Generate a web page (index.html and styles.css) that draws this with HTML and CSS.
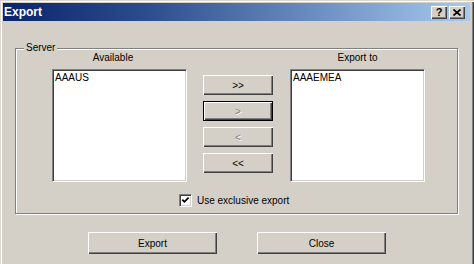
FILE: index.html
```html
<!DOCTYPE html>
<html lang="en">
<head>
    <meta charset="UTF-8">
    <meta name="viewport" content="width=device-width, initial-scale=1.0">
    <title>Export</title>
    <link rel="stylesheet" href="styles.css">
</head>
<body>
    <!-- Dialog window -->
    <div class="window">
        <div class="titlebar">
            <span class="title">Export</span>
            <div class="caption-btns">
                <div class="cap-btn help">?</div>
                <div class="cap-btn close">
                    <svg width="8" height="7" viewBox="0 0 8 7">
                        <path d="M0.5 0.5 L7.5 6.5 M7.5 0.5 L0.5 6.5" stroke="#000" stroke-width="1.7" fill="none"/>
                    </svg>
                </div>
            </div>
        </div>

        <div class="client">
            <!-- Server group -->
            <div class="group">
                <span class="legend">Server</span>

                <div class="lists">
                    <div class="col col-left">
                        <div class="col-label">Available</div>
                        <div class="listbox">
                            <div class="item">AAAUS</div>
                        </div>
                    </div>

                    <div class="movers">
                        <div class="btn">&gt;&gt;</div>
                        <div class="btn default disabled">&gt;</div>
                        <div class="btn disabled">&lt;</div>
                        <div class="btn">&lt;&lt;</div>
                    </div>

                    <div class="col">
                        <div class="col-label">Export to</div>
                        <div class="listbox">
                            <div class="item">AAAEMEA</div>
                        </div>
                    </div>
                </div>

                <div class="check-row">
                    <span class="checkbox">
                        <svg width="9" height="9" viewBox="0 0 9 9">
                            <path d="M1.3 3.6 L3.4 5.8 L7.6 1.6" stroke="#000" stroke-width="1.8" fill="none"/>
                        </svg>
                    </span>
                    <span class="check-label">Use exclusive export</span>
                </div>
            </div>

            <!-- Dialog buttons -->
            <div class="actions">
                <div class="btn wide">Export</div>
                <div class="btn wide">Close</div>
            </div>
        </div>
    </div>
</body>
</html>
```

FILE: styles.css
```css
/* Reset CSS */
* {
    margin: 0;
    padding: 0;
    box-sizing: border-box;
}

body {
    font-family: 'Liberation Sans', Arial, sans-serif;
    font-size: 10px;
    background: #d4d0c8;
    color: #000;
    width: 474px;
    height: 264px;
    overflow: hidden;
}

/* Window frame */
.window {
    width: 474px;
    height: 268px;
    padding: 3px 4px 0 3px;
    background: #d4d0c8;
    box-shadow: inset 1px 1px 0 #dcd8d0, inset 2px 2px 0 #fff, inset -1px -1px 0 #404040, inset -2px -2px 0 #808080;
}

.titlebar {
    height: 18px;
    display: flex;
    align-items: center;
    justify-content: space-between;
    padding: 0 5px 0 1px;
    background: linear-gradient(90deg, #0a246a 0%, #2a4c8c 30%, #a6caf0 100%);
}

.title {
    color: #fff;
    font-weight: bold;
    font-size: 12px;
}

.caption-btns {
    display: flex;
    gap: 2px;
}

.cap-btn {
    width: 16px;
    height: 13px;
    background: #d4d0c8;
    display: flex;
    align-items: center;
    justify-content: center;
    font-weight: bold;
    font-size: 11px;
    line-height: 1;
    box-shadow: inset 1px 1px 0 #fff, inset -1px -1px 0 #404040, inset -2px -2px 0 #808080;
}

.client {
    padding: 27px 12px 0 12px;
}

/* Group box */
.group {
    position: relative;
    width: 443px;
    height: 166px;
    padding: 3px 0 0 36px;
    border: 1px solid #808080;
    box-shadow: 1px 1px 0 #fff, inset 1px 1px 0 #fff;
}

.legend {
    position: absolute;
    top: -7px;
    left: 8px;
    padding: 0 2px;
    background: #d4d0c8;
    line-height: 12px;
}

.lists {
    display: flex;
    align-items: flex-start;
}

.col {
    width: 135px;
}

.col-label {
    line-height: 12px;
    height: 12px;
    margin-bottom: 5px;
    text-align: center;
}

.col-left .col-label {
    padding-right: 13px;
}

.listbox {
    height: 113px;
    background: #fff;
    border-top: 1px solid #808080;
    border-left: 1px solid #808080;
    border-bottom: 1px solid #fff;
    border-right: 1px solid #fff;
    box-shadow: inset 1px 1px 0 #404040, inset -1px -1px 0 #d4d0c8;
    padding: 2px 2px;
}

.item {
    line-height: 12px;
}

.movers {
    width: 70px;
    margin: 23px 17px 0 16px;
    display: flex;
    flex-direction: column;
    gap: 6px;
}

/* Raised buttons */
.btn {
    height: 20px;
    display: flex;
    align-items: center;
    justify-content: center;
    background: #d4d0c8;
    box-shadow: inset 1px 1px 0 #fff, inset -1px -1px 0 #404040, inset -2px -2px 0 #808080;
}

.btn.default {
    border: 1px solid #000;
}

.btn.disabled {
    color: #808080;
    text-shadow: 1px 1px 0 #fff;
}

/* Checkbox */
.check-row {
    display: flex;
    align-items: center;
    margin: 12px 0 0 127px;
    height: 13px;
}

.checkbox {
    width: 13px;
    height: 13px;
    background: #fff;
    border-top: 1px solid #808080;
    border-left: 1px solid #808080;
    border-bottom: 1px solid #fff;
    border-right: 1px solid #fff;
    box-shadow: inset 1px 1px 0 #404040, inset -1px -1px 0 #d4d0c8;
    display: flex;
    align-items: center;
    justify-content: center;
    margin-right: 5px;
}

/* Dialog buttons */
.actions {
    display: flex;
    justify-content: center;
    gap: 40px;
    margin-top: 18px;
    padding-left: 1px;
}

.btn.wide {
    width: 129px;
    height: 22px;
}
```
